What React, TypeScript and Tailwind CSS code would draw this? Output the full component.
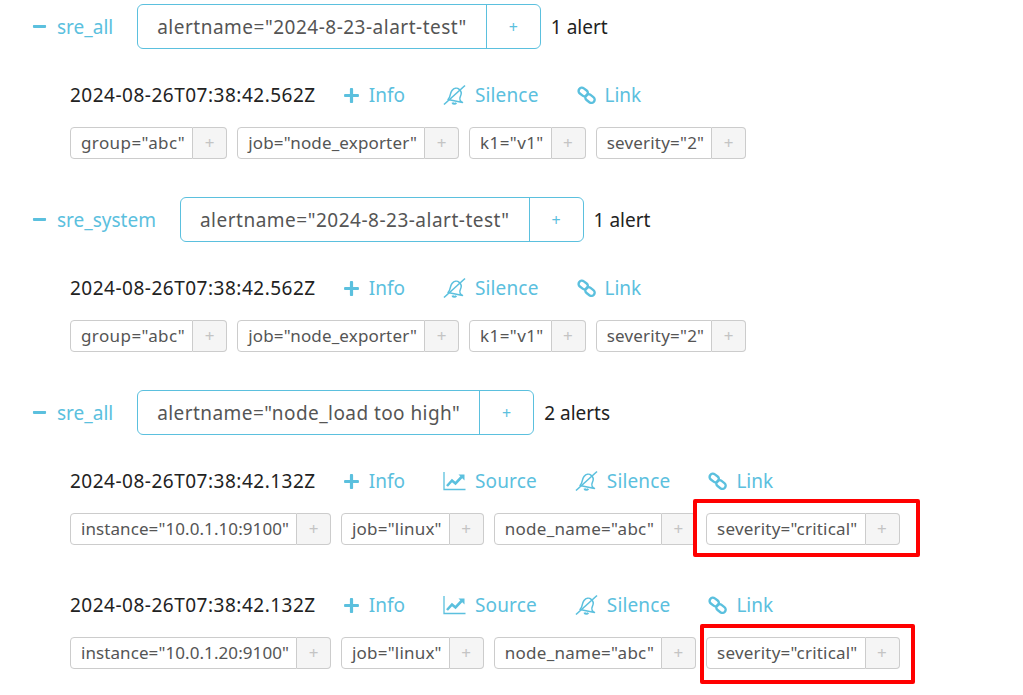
import { FaMinus, FaPlus } from "react-icons/fa";

type Label = { text: string; track?: string; mark?: "a" | "b" };

type Alert = { time: string; source?: boolean; labels: Label[] };

type Group = { name: string; alertname: string; track: string; count: string; alerts: Alert[] };

const abcLabels: Label[] = [
  { text: 'group="abc"', track: "tracking-[0.4px]" },
  { text: 'job="node_exporter"', track: "tracking-[0.15px]" },
  { text: 'k1="v1"', track: "tracking-[0.4px]" },
  { text: 'severity="2"' },
];

const groups: Group[] = [
  {
    name: "sre_all",
    alertname: 'alertname="2024-8-23-alart-test"',
    track: "tracking-[0.5px]",
    count: "1 alert",
    alerts: [{ time: "2024-08-26T07:38:42.562Z", labels: abcLabels }],
  },
  {
    name: "sre_system",
    alertname: 'alertname="2024-8-23-alart-test"',
    track: "tracking-[0.5px]",
    count: "1 alert",
    alerts: [{ time: "2024-08-26T07:38:42.562Z", labels: abcLabels }],
  },
  {
    name: "sre_all",
    alertname: 'alertname="node_load too high"',
    track: "tracking-[0.43px]",
    count: "2 alerts",
    alerts: [
      {
        time: "2024-08-26T07:38:42.132Z",
        source: true,
        labels: [
          { text: 'instance="10.0.1.10:9100"', track: "tracking-[0.08px]" },
          { text: 'job="linux"' },
          { text: 'node_name="abc"', track: "tracking-[0.27px]" },
          { text: 'severity="critical"', mark: "a" },
        ],
      },
      {
        time: "2024-08-26T07:38:42.132Z",
        source: true,
        labels: [
          { text: 'instance="10.0.1.20:9100"', track: "tracking-[0.08px]" },
          { text: 'job="linux"' },
          { text: 'node_name="abc"', track: "tracking-[0.27px]" },
          { text: 'severity="critical"', mark: "b" },
        ],
      },
    ],
  },
];

const ChartIcon = () => (
  <svg width="23" height="20" viewBox="0 0 23 20" fill="none" stroke="currentColor">
    <path d="M1 1v17.5h21.5" strokeWidth="1.3" />
    <path d="M4 15l5-5.5 3.5 3L19 5.5" strokeWidth="2.6" />
    <path d="M15.5 3.5H21.5V9.5Z" fill="currentColor" strokeWidth="0" />
  </svg>
);

const SilenceIcon = () => (
  <svg width="23" height="22" viewBox="0 0 23 22" fill="none" stroke="currentColor">
    <path
      d="M5 15.5C8 13 6.5 9.5 9 6.5c2-2.4 5-3 7.2-1.2s2.6 4.4 1.2 7c-1.8 3.4.4 5.3 2.1 6.2L5 15.5Z"
      strokeWidth="1.5"
      strokeLinejoin="round"
    />
    <path d="M9.5 18.5c.2 1.4 2.6 2 3.8.2" strokeWidth="2" />
    <path d="M1 20.5L22 1.5" strokeWidth="1.6" />
  </svg>
);

const LinkIcon = () => (
  <svg width="19" height="18" viewBox="0 0 19 18" fill="none" stroke="currentColor" strokeWidth="2.4">
    <rect x="-4.5" y="-3" width="10" height="6.5" rx="3.2" transform="translate(6 5.5) rotate(38)" />
    <rect x="-5" y="-3.2" width="10" height="6.5" rx="3.2" transform="translate(13 12.5) rotate(38)" />
  </svg>
);

const ActionLink = ({ icon, text, gap, track }: { icon: React.ReactNode; text: string; gap: string; track?: string }) => (
  <a className={`mr-[38px] flex items-center text-[#5bc0de] ${gap}`}>
    {icon}
    <span className={track}>{text}</span>
  </a>
);

const LabelTag = ({ label }: { label: Label }) => (
  <div className={`relative flex h-8 text-[17px] text-[#555] ${label.track ?? "tracking-[0.2px]"}`}>
    <span className="flex items-center rounded-l border border-[#ccc] pr-[7px] pl-[10px]">{label.text}</span>
    <span className="flex w-[34px] items-center justify-center rounded-r border border-l-0 border-[#ccc] bg-[#f5f5f5] text-[#c4c4c4]">
      +
    </span>
    {label.mark === "a" && (
      <div className="absolute -top-[14px] -right-[20px] -bottom-[12px] -left-[13px] rounded-[2px] border-[4px] border-[#ff0000]" />
    )}
    {label.mark === "b" && (
      <div className="absolute -top-[13px] -right-[15px] -bottom-[15px] -left-[6px] rounded-[2px] border-[4px] border-[#ff0000]" />
    )}
  </div>
);

const AlertRow = ({ alert }: { alert: Alert }) => (
  <div className="mb-[44px] pl-[38px] last:mb-0">
    <div className="flex h-8 items-center text-[19px] text-[#222]">
      <span className="mr-[28px] tracking-[0.5px]">{alert.time}</span>
      <ActionLink icon={<FaPlus className="-mx-px text-[17px]" />} text="Info" gap="gap-[10px]" />
      {alert.source && <ActionLink icon={<ChartIcon />} text="Source" gap="gap-[9px]" track="tracking-[0.15px]" />}
      <ActionLink icon={<SilenceIcon />} text="Silence" gap="gap-[9px]" track="tracking-[0.15px]" />
      <ActionLink icon={<LinkIcon />} text="Link" gap="gap-[9px]" />
    </div>
    <div className="mt-[16px] flex gap-[10px]">
      {alert.labels.map((label) => (
        <LabelTag key={label.text} label={label} />
      ))}
    </div>
  </div>
);

export default function App() {
  return (
    <div className="h-[695px] overflow-hidden bg-white pt-1 pl-8 font-['Noto_Sans',sans-serif]">
      {groups.map((group, i) => (
        <div key={i} className="mb-[38px]">
          <div className="flex h-[45px] items-center text-[19px]">
            <FaMinus className="mr-[10px] text-[15px] text-[#5bc0de]" />
            <span className="mr-6 pt-[2px] text-[#5bc0de]">{group.name}</span>
            <div className="flex h-full rounded-md border border-[#5bc0de] text-[#555]">
              <span className={`flex items-center px-[19px] pt-[2px] ${group.track}`}>{group.alertname}</span>
              <span className="flex w-[54px] items-center justify-center border-l border-[#5bc0de] text-base text-[#5bc0de]">
                +
              </span>
            </div>
            <span className="ml-[10px] pt-[2px] text-[#222]">{group.count}</span>
          </div>
          <div className="mt-[30px]">
            {group.alerts.map((alert, j) => (
              <AlertRow key={j} alert={alert} />
            ))}
          </div>
        </div>
      ))}
    </div>
  );
}
